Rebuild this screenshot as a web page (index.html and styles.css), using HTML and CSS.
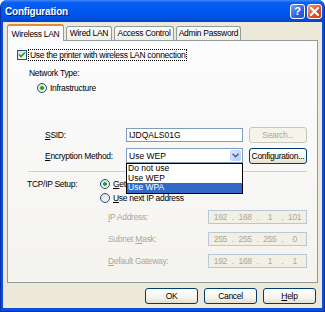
FILE: index.html
```html
<!DOCTYPE html>
<html lang="en">
<head>
  <meta charset="UTF-8" />
  <title>Configuration</title>
  <link rel="stylesheet" href="styles.css">
</head>
<body>
  <div class="window">
    <div class="titlebar">
      <span class="title">Configuration</span>
      <div class="caption-buttons">
        <span class="cap-btn cap-help">?</span>
        <span class="cap-btn cap-close">
          <svg width="9" height="9" viewBox="0 0 9 9"><path d="M1 1L8 8M8 1L1 8" stroke="#fff" stroke-width="2" stroke-linecap="square"/></svg>
        </span>
      </div>
    </div>

    <div class="client">
      <div class="tabs">
        <div class="tab active">Wireless LAN</div>
        <div class="tab wired">Wired LAN</div>
        <div class="tab access">Access Control</div>
        <div class="tab admin">Admin Password</div>
      </div>

      <div class="panel">
        <div class="check-row">
          <span class="checkbox">
            <svg width="8" height="8" viewBox="0 0 8 8"><path d="M1 3.5L3 5.5L7 1.5" fill="none" stroke="#21a121" stroke-width="1.6"/></svg>
          </span>
          <span class="focus">Use the <u>p</u>rinter with wireless LAN connection</span>
        </div>

        <div class="net-type">Network Type:</div>
        <div class="radio-row infra"><span class="radio on"></span>Infrastructure</div>

        <div class="form-row ssid">
          <span class="form-label"><u>S</u>SID:</span>
          <div class="field">IJDQALS01G</div>
          <button class="btn side-btn" disabled>Search...</button>
        </div>

        <div class="form-row enc">
          <span class="form-label"><u>E</u>ncryption Method:</span>
          <div class="combo">
            <span class="combo-value">Use WEP</span>
            <span class="combo-arrow">
              <svg width="7" height="5" viewBox="0 0 7 5"><path d="M0.5 0.8L3.5 3.8L6.5 0.8" fill="none" stroke="#4d6185" stroke-width="1.5"/></svg>
            </span>
            <ul class="combo-list">
              <li>Do not use</li>
              <li>Use WEP</li>
              <li class="selected">Use WPA</li>
            </ul>
          </div>
          <button class="btn side-btn">Configuration...</button>
        </div>

        <div class="separator"></div>

        <div class="tcp-row">
          <span class="tcp-label">TCP/IP Setup:</span>
          <span class="radio on"></span><u>G</u>et IP address automatically
        </div>
        <div class="radio-row next"><span class="radio"></span><u>U</u>se next IP address</div>

        <div class="ip-row first">
          <span class="ip-label"><u>I</u>P Address:</span>
          <div class="ip-field"><span>192</span>.<span>168</span>.<span>1</span>.<span>101</span></div>
        </div>
        <div class="ip-row">
          <span class="ip-label">Subnet <u>M</u>ask:</span>
          <div class="ip-field"><span>255</span>.<span>255</span>.<span>255</span>.<span>0</span></div>
        </div>
        <div class="ip-row">
          <span class="ip-label"><u>D</u>efault Gateway:</span>
          <div class="ip-field"><span>192</span>.<span>168</span>.<span>1</span>.<span>1</span></div>
        </div>
      </div>

      <div class="dialog-buttons">
        <button class="btn">OK</button>
        <button class="btn">Cancel</button>
        <button class="btn"><u>H</u>elp</button>
      </div>
    </div>
  </div>
</body>
</html>
```

FILE: styles.css
```css
:root {
  --frame: #0a4fdc;
  --face: #ece9d8;
  --panel-border: #919b9c;
  --edit-border: #7f9db9;
  --btn-border: #003c74;
  --disabled: #aca899;
  --select: #316ac5;
}

body {
  margin: 0;
  font-family: "Liberation Sans", Arial, sans-serif;
  font-size: 8.5px;
  letter-spacing: -0.3px;
  color: #000;
}

u {
  text-decoration: underline;
}

.window {
  width: 325px;
  height: 312px;
  box-sizing: border-box;
  display: flex;
  flex-direction: column;
  background: var(--frame);
  border-radius: 7px 7px 0 0;
  border: 1px solid #0831a8;
  border-top: none;
  overflow: hidden;
}

/* title bar */
.titlebar {
  height: 22px;
  display: flex;
  align-items: center;
  justify-content: space-between;
  padding: 0 2px 0 4px;
  background: linear-gradient(#3c8cf8 0%, #0a5df2 12%, #0058ee 45%, #0052e4 80%, #0045c8 100%);
}

.title {
  color: #fff;
  font-weight: bold;
  font-size: 10px;
  letter-spacing: -0.2px;
  text-shadow: 1px 1px #0a1e7a;
}

.caption-buttons {
  display: flex;
  gap: 2px;
}

.cap-btn {
  width: 15px;
  height: 15px;
  box-sizing: border-box;
  border: 1px solid #fff;
  border-radius: 3px;
  display: flex;
  align-items: center;
  justify-content: center;
  color: #fff;
  font-weight: bold;
  font-size: 11px;
  letter-spacing: 0;
}

.cap-help {
  background: linear-gradient(135deg, #6fa0ff, #2a63e6 60%, #1e50d8);
}

.cap-close {
  background: linear-gradient(135deg, #f09a7c, #e0542b 55%, #c83c18);
}

/* client area */
.client {
  flex: 1;
  margin: 0 2px 3px;
  background: var(--face);
  padding: 2px 4px 4px;
  display: flex;
  flex-direction: column;
}

.tabs {
  display: flex;
  align-items: flex-end;
  gap: 2px;
  height: 16px;
  position: relative;
  z-index: 1;
}

.tab {
  height: 14px;
  box-sizing: border-box;
  text-align: center;
  line-height: 13px;
  border: 1px solid var(--panel-border);
  border-bottom: none;
  border-radius: 3px 3px 0 0;
  background: linear-gradient(#fefefe, #f0efe6);
}

.tab.active {
  width: 57px;
  height: 17px;
  margin-bottom: -1px;
  line-height: 16px;
  background: #fcfcfe;
  border-top: 2px solid #e68b2c;
}

.tab.wired { width: 46px; }
.tab.access { width: 60px; }
.tab.admin { width: 65px; }

.panel {
  height: 243px;
  box-sizing: border-box;
  border: 1px solid var(--panel-border);
  background: linear-gradient(#fcfcfe, #f4f3ee);
  display: flex;
  flex-direction: column;
}

/* check and radio boxes */
.checkbox,
.radio {
  width: 10px;
  height: 10px;
  box-sizing: border-box;
  border: 1px solid #1c5180;
  background: linear-gradient(135deg, #dcdcd7, #fff);
  display: inline-flex;
  align-items: center;
  justify-content: center;
  flex: none;
}

.radio {
  border-radius: 50%;
  margin-right: 3px;
}

.radio.on::after {
  content: "";
  width: 4px;
  height: 4px;
  border-radius: 50%;
  background: #21a121;
}

.check-row {
  display: flex;
  align-items: center;
  gap: 2px;
  margin: 9px 0 0 9px;
  height: 10px;
}

.focus {
  outline: 1px dotted #000;
  padding: 0 1px;
  line-height: 10px;
}

.net-type {
  margin: 7px 0 0 21px;
  line-height: 12px;
}

.radio-row {
  display: flex;
  align-items: center;
  height: 10px;
}

.infra {
  margin: 4px 0 0 29px;
}

/* SSID / encryption rows */
.form-row {
  display: flex;
  align-items: center;
  height: 15px;
  padding-left: 37px;
}

.ssid {
  margin-top: 34px;
}

.enc {
  margin-top: 6px;
}

.form-label {
  width: 81px;
}

.field,
.combo {
  width: 117px;
  height: 14px;
  box-sizing: border-box;
  border: 1px solid var(--edit-border);
  background: #fff;
  padding-left: 2px;
  line-height: 12px;
  font-size: 8.5px;
  letter-spacing: 0;
}

.combo {
  position: relative;
  height: 15px;
  display: flex;
  align-items: center;
  justify-content: space-between;
  padding-right: 1px;
}

.combo-arrow {
  width: 11px;
  height: 11px;
  border-radius: 2px;
  background: linear-gradient(135deg, #e2ebfd, #b4caf7);
  border: 1px solid #c3d3fd;
  box-sizing: border-box;
  display: flex;
  align-items: center;
  justify-content: center;
}

.combo-list {
  position: absolute;
  top: 14px;
  left: -1px;
  width: 117px;
  margin: 0;
  padding: 0;
  list-style: none;
  box-sizing: border-box;
  border: 1px solid #000;
  background: #fff;
  font-size: 8.5px;
  letter-spacing: 0;
  line-height: 9.6px;
  z-index: 2;
}

.combo-list li {
  padding-left: 1px;
}

.combo-list .selected {
  background: var(--select);
  color: #fff;
}

.btn {
  font-family: inherit;
  font-size: 8.5px;
  letter-spacing: -0.3px;
  color: #000;
  height: 16px;
  padding: 0;
  box-sizing: border-box;
  border: 1px solid var(--btn-border);
  border-radius: 3px;
  background: linear-gradient(#fff, #f4f3ee 60%, #e3e0d0);
}

.btn:disabled {
  border-color: #c9c7ba;
  color: var(--disabled);
  background: #f5f4ea;
}

.side-btn {
  width: 58px;
  margin-left: 6px;
}

.separator {
  height: 1px;
  margin: 8px 10px 0 20px;
  background: #d0d0bf;
}

/* TCP/IP */
.tcp-row {
  display: flex;
  align-items: center;
  height: 11px;
  margin: 6px 0 0 19px;
  white-space: nowrap;
}

.tcp-label {
  width: 73px;
}

.next {
  margin: 4px 0 0 92px;
}

.ip-row {
  display: flex;
  align-items: center;
  height: 15px;
  padding-left: 100px;
  margin-top: 7px;
  color: var(--disabled);
}

.ip-row.first {
  margin-top: 6px;
}

.ip-label {
  width: 100px;
}

.ip-field {
  width: 99px;
  height: 14px;
  box-sizing: border-box;
  border: 1px solid #b8c8dc;
  background: #f2efe4;
  display: flex;
  align-items: center;
  font-size: 8.5px;
}

.ip-field span {
  flex: 1;
  text-align: center;
}

/* bottom buttons */
.dialog-buttons {
  display: flex;
  justify-content: flex-end;
  gap: 6px;
  margin-top: 5px;
  padding-right: 2px;
}

.dialog-buttons .btn {
  width: 53px;
}
```
